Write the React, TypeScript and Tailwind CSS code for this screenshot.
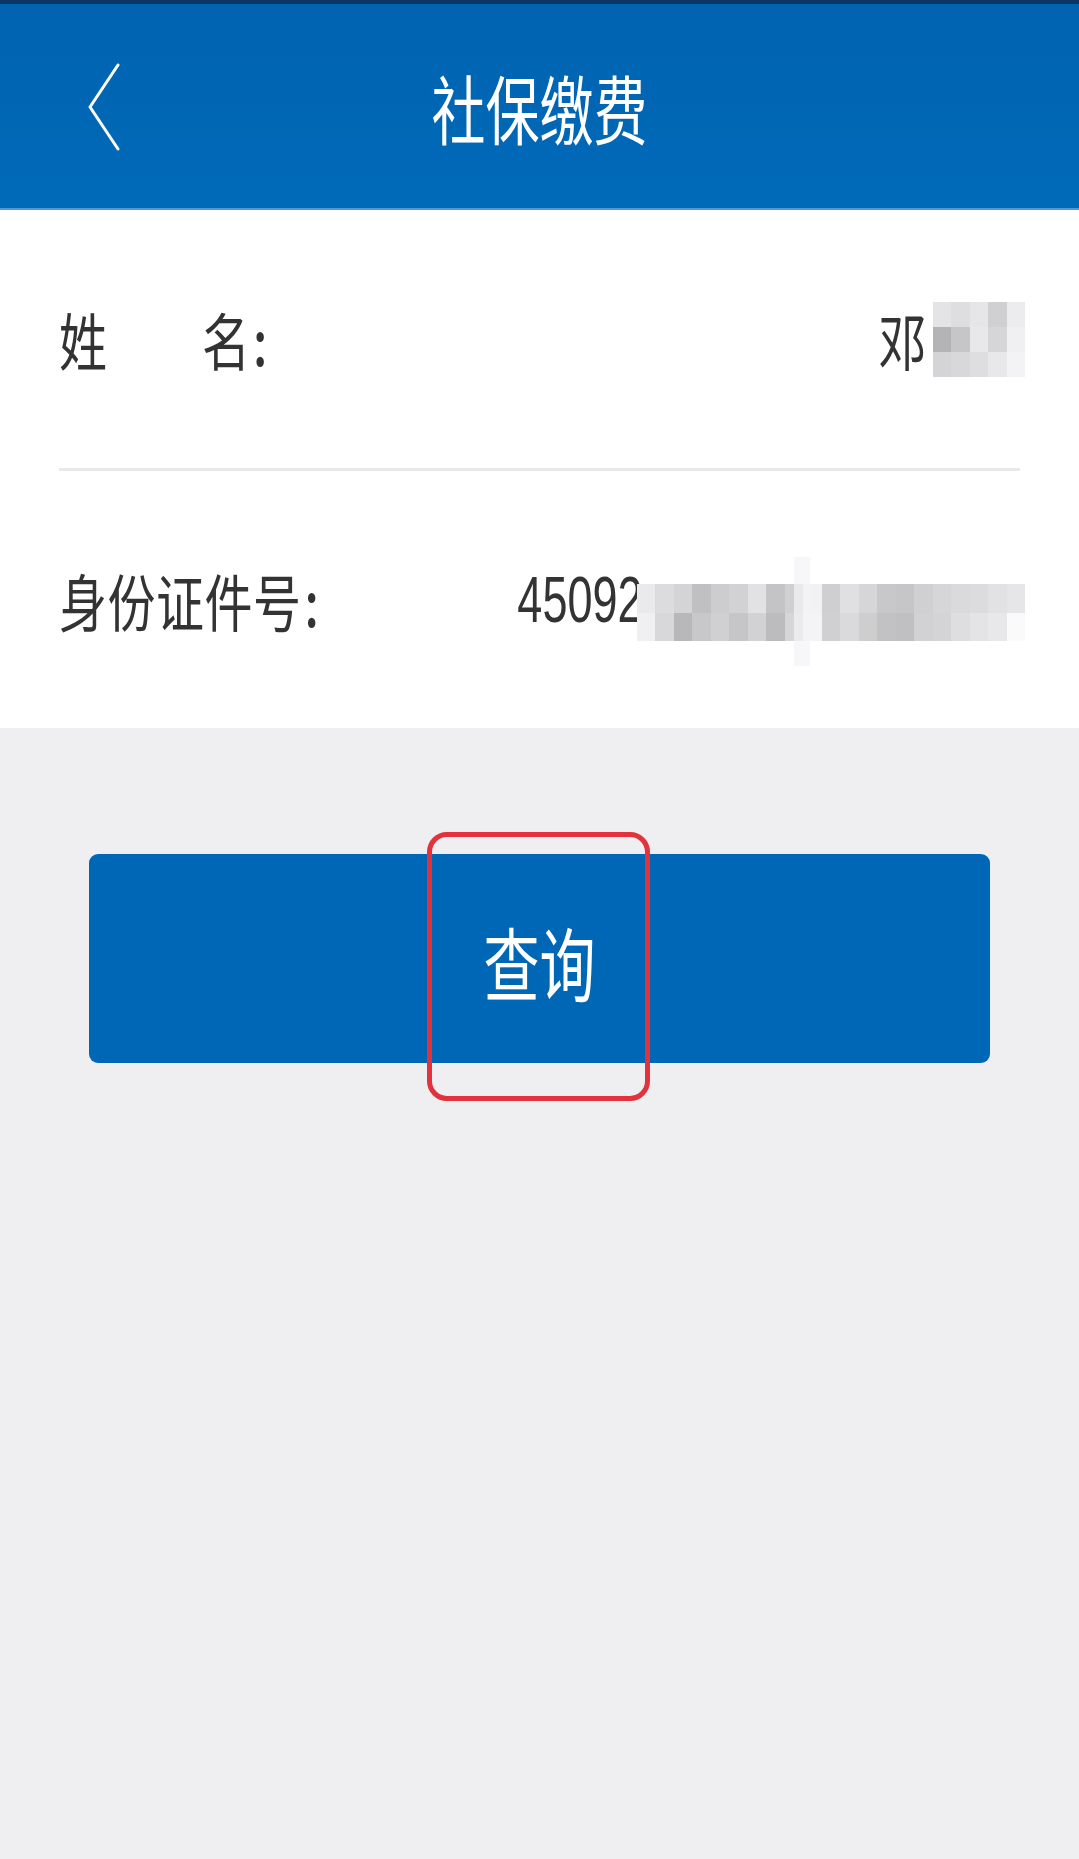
import React from 'react'

const cjk = { fontFamily: '"Noto Sans CJK SC", "Noto Sans", sans-serif' }

// mosaic cells (the blurred parts of the screenshot)
const nameMosaic = [
  ['#e4e4e6', '#dedee0', '#e6e6e8', '#d0d0d2', '#ececee'],
  ['#b4b4b6', '#c6c6c8', '#e8e8ea', '#d6d6d8', '#f0f0f2'],
  ['#d4d4d6', '#d8d8da', '#dedee0', '#e8e8ea', '#f3f3f5'],
]

const idMosaic = [
  ['#eaeaec', '#dcdcde', '#d4d4d6', '#c0c0c2', '#cdcdcf', '#d2d2d4', '#e2e2e4', '#c4c4c6', '#d0d0d2', '#f2f2f4', '#cfcfd1', '#e0e0e2', '#d6d6d8', '#c8c8ca', '#c6c6c8', '#d0d0d2', '#d6d6d8', '#dadadc', '#dcdcde', '#e2e2e4', '#e6e6e8'],
  ['#f0f0f2', '#d8d8da', '#b8b8ba', '#c8c8ca', '#d0d0d2', '#c6c6c8', '#d2d2d4', '#bcbcbe', '#d6d6d8', '#f4f4f6', '#d0d0d2', '#dadadc', '#cececf', '#c2c2c4', '#c0c0c2', '#d2d2d4', '#d4d4d6', '#dedee0', '#e4e4e6', '#e8e8ea', '#fafafa'],
]

function Mosaic({ cells, w, h }: { cells: string[][]; w: number; h: number }) {
  return (
    <div className="flex flex-col">
      {cells.map((row, i) => (
        <div key={i} className="flex">
          {row.map((c, j) => (
            <div key={j} style={{ backgroundColor: c, width: w, height: h }} />
          ))}
        </div>
      ))}
    </div>
  )
}

export default function App() {
  return (
    <div className="min-h-screen w-full bg-[#efeef0]" style={cjk}>
      {/* header */}
      <div className="h-[4px] bg-[#0b3563]" />
      <div className="grid h-[204px] grid-cols-[1fr_auto_1fr] items-center bg-gradient-to-b from-[#0063b0] to-[#006ab9]">
        <div className="flex items-center pl-[86px] pt-[4px]">
          <svg width="36" height="90" viewBox="0 0 36 90" fill="none">
            <path d="M32 2 L4 44 L32 86" stroke="#ffffff" strokeWidth="3" strokeLinecap="round" strokeLinejoin="round" />
          </svg>
        </div>
        <div className="pt-[2px] text-[54px] leading-none text-white">
          <span className="inline-block scale-y-[1.38]">社保缴费</span>
        </div>
        <div />
      </div>
      <div className="h-[2px] bg-[#4f9ad6]" />

      {/* form */}
      <div className="bg-white pl-[59px] pr-[54px]">
        <div className="flex h-[258px] items-center justify-between text-[#333333]">
          <div className="flex items-center text-[48px] leading-none">
            <span className="inline-block w-[143px] scale-y-[1.3]">姓</span>
            <span className="inline-block scale-y-[1.3]">名</span>
            <span className="ml-[3px] inline-block scale-y-[1.3] font-medium">:</span>
          </div>
          <div className="flex items-center">
            <span className="inline-block scale-y-[1.3] text-[48px] leading-none">邓</span>
            <div className="ml-[6px]">
              <Mosaic cells={nameMosaic} w={18.5} h={25} />
            </div>
          </div>
        </div>
        <div className="mr-[5px] h-[3px] bg-[#e9e9ed]" />
        <div className="flex h-[257px] items-center justify-between text-[#333333]">
          <div className="flex items-center text-[48px] leading-none">
            <span className="inline-block scale-y-[1.3] tracking-[0.5px]">身份证件号</span>
            <span className="ml-[3px] inline-block scale-y-[1.3] font-medium">:</span>
          </div>
          <div className="flex items-center">
            <span
              className="inline-block scale-y-[1.45] text-[45px] leading-none"
              style={{ fontFamily: '"Liberation Sans", sans-serif' }}
            >
              45092
            </span>
            <div className="relative -ml-[6px] mt-[26px]">
              <Mosaic cells={idMosaic} w={18.5} h={28.5} />
              <div className="absolute -top-[27px] left-[157px] h-[109px] w-[16px] bg-[#f4f4f6] opacity-70" />
            </div>
          </div>
        </div>
      </div>

      {/* button */}
      <div className="px-[89px] pt-[126px]">
        <div className="relative flex h-[209px] items-center justify-center rounded-[9px] bg-[#0067b7]">
          <span className="inline-block scale-y-[1.42] pt-[2px] text-[56px] leading-none text-white">查询</span>
          <div className="absolute -top-[22px] left-[338px] h-[269px] w-[223px] rounded-[20px] border-[5px] border-[#e2323d]" />
        </div>
      </div>
    </div>
  )
}
